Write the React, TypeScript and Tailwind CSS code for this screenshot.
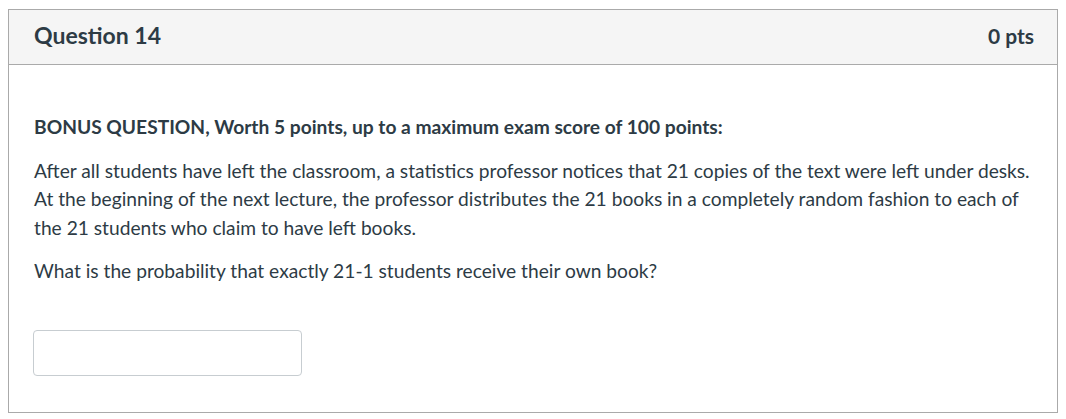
export default function App() {
    return (
        <div className="bg-white w-[1066px] h-[419px] pt-[9px] pl-[8px] font-['Lato','Liberation_Sans',sans-serif] text-[#2d3b45]">
            <div className="w-[1050px] h-[404px] border border-[#aaaaaa] flex flex-col">
                <div className="h-[55px] bg-[#f5f5f5] border-b border-[#aaaaaa] flex items-center justify-between pl-[25px] pr-[23px] pb-[3px]">
                    <h2 className="text-[23px] font-bold">Question 14</h2>
                    <span className="text-[21px] font-bold">0 pts</span>
                </div>
                <div className="px-[25px] pt-[48px] text-[19.2px] leading-[28.5px]">
                    <p className="font-bold">BONUS QUESTION, Worth 5 points, up to a maximum exam score of 100 points:</p>
                    <p className="mt-[15px]">
                        After all students have left the classroom, a statistics professor notices that 21 copies of the text were left under desks.
                        At the beginning of the next lecture, the professor distributes the 21 books in a completely random fashion to each of
                        the 21 students who claim to have left books.
                    </p>
                    <p className="mt-[15px]">What is the probability that exactly 21-1 students receive their own book?</p>
                    <input
                        type="text"
                        className="block mt-[44px] -ml-[1px] w-[269px] h-[46px] border border-[#c7cdd1] rounded-[4px] bg-white outline-none"
                    />
                </div>
            </div>
        </div>
    );
}
